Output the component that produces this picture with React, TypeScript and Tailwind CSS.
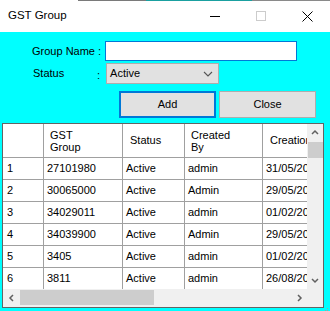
import React from "react";

const rows = [
  ["1", "27101980", "Active", "admin", "31/05/2019"],
  ["2", "30065000", "Active", "Admin", "29/05/2019"],
  ["3", "34029011", "Active", "admin", "01/02/2019"],
  ["4", "34039900", "Active", "Admin", "29/05/2019"],
  ["5", "3405", "Active", "admin", "01/02/2019"],
  ["6", "3811", "Active", "admin", "26/08/2019"],
];

const widths = ["w-[41px]", "w-[79px]", "w-[62px]", "w-[78px]", "w-[80px]"];

function Chevron({ dir, className }: { dir: "up" | "down" | "left" | "right"; className?: string }) {
  const d =
    dir === "up"
      ? "M1 5 L4 2 L7 5"
      : dir === "down"
      ? "M1 2 L4 5 L7 2"
      : dir === "left"
      ? "M5 1 L2 4 L5 7"
      : "M3 1 L6 4 L3 7";
  return (
    <svg width="8" height="8" viewBox="0 0 8 8" className={className}>
      <path d={d} fill="none" stroke="#606060" strokeWidth="1.5" />
    </svg>
  );
}

export default function App() {
  return (
    <div
      className="w-[330px] h-[311px] overflow-hidden flex flex-col bg-[#00ffff] text-black text-[11px]"
      style={{ fontFamily: '"Liberation Sans", Arial, sans-serif' }}
    >
      {/* top 1px strip */}
      <div className="h-[1px] flex shrink-0">
        <div className="w-[78px] bg-white" />
        <div className="w-[68px] bg-[#7a7a7a]" />
        <div className="w-[106px] bg-[#1aa0a0]" />
        <div className="flex-1 bg-[#8a8a8a]" />
      </div>
      {/* title bar */}
      <div className="h-[31px] bg-white flex items-center shrink-0 relative">
        <span className="pl-[8px] text-[11.5px] -mt-[2px]">GST Group</span>
        <div className="ml-auto flex items-center h-full -mt-[1px]">
          <div className="w-[46px] flex justify-center">
            <div className="w-[10px] h-[1px] bg-black" />
          </div>
          <div className="w-[46px] flex justify-center">
            <div className="w-[10px] h-[10px] border border-[#cccccc]" />
          </div>
          <div className="w-[46px] flex justify-center">
            <svg width="11" height="11" viewBox="0 0 11 11">
              <path d="M0.5 0.5 L10.5 10.5 M10.5 0.5 L0.5 10.5" stroke="#000" strokeWidth="1" />
            </svg>
          </div>
        </div>
      </div>
      {/* body */}
      <div className="flex-1 flex flex-col pt-[9px]">
        <div className="flex items-center h-[20px]">
          <span className="pl-[32px] w-[105px] shrink-0">Group Name :</span>
          <div className="w-[192px] h-[20px] bg-white border border-[#0078d7]" />
        </div>
        <div className="flex items-center h-[21px] mt-[2px]">
          <span className="pl-[33px] w-[97px] shrink-0">Status</span>
          <span className="mt-[3px]">:</span>
          <div className="ml-[6px] w-[113px] h-[21px] bg-[#e1e1e1] border border-[#adadad] flex items-center pl-[3px]">
            <span>Active</span>
            <svg width="10" height="6" viewBox="0 0 10 6" className="ml-auto mr-[5px]">
              <path d="M1 1 L5 5 L9 1" fill="none" stroke="#555" strokeWidth="1.1" />
            </svg>
          </div>
        </div>
        <div className="flex mt-[7px] pl-[119px] gap-[3px]">
          <div className="w-[97px] h-[27px] bg-[#e1e1e1] border-2 border-[#0078d7] flex items-center justify-center">
            Add
          </div>
          <div className="w-[97px] h-[27px] bg-[#e1e1e1] border border-[#adadad] flex items-center justify-center">
            Close
          </div>
        </div>
        {/* grid */}
        <div className="relative mt-[5px] ml-[2px] w-[322px] h-[185px] border border-[#646464] bg-[#f0f0f0] flex flex-col">
          <div className="flex h-[165px]">
            <div className="w-[304px] overflow-hidden bg-white">
              <div className="flex h-[34px] border-b border-[#a0a0a0] w-max">
                <div className={`${widths[0]} border-r border-[#a0a0a0] shrink-0`} />
                <div className={`${widths[1]} border-r border-[#a0a0a0] shrink-0 flex items-center pl-[6px] leading-[12px]`}>
                  GST
                  <br />
                  Group
                </div>
                <div className={`${widths[2]} border-r border-[#a0a0a0] shrink-0 flex items-center pl-[7px]`}>Status</div>
                <div className={`${widths[3]} border-r border-[#a0a0a0] shrink-0 flex items-center pl-[6px] leading-[12px]`}>
                  Created
                  <br />
                  By
                </div>
                <div className={`${widths[4]} border-r border-[#a0a0a0] shrink-0 flex items-center pl-[7px]`}>Creation Date</div>
              </div>
              {rows.map((r, i) => (
                <div key={i} className="flex h-[22px] border-b border-[#a0a0a0] w-max">
                  {r.map((c, j) => (
                    <div
                      key={j}
                      className={`${widths[j]} border-r border-[#a0a0a0] shrink-0 flex items-center ${j === 0 ? "pl-[4px]" : "pl-[3px]"} whitespace-nowrap overflow-hidden`}
                    >
                      {c}
                    </div>
                  ))}
                </div>
              ))}
            </div>
            {/* vertical scrollbar */}
            <div className="w-[16px] bg-[#f0f0f0] flex flex-col items-center">
              <div className="h-[17px] flex items-center justify-center">
                <Chevron dir="up" />
              </div>
              <div className="w-[15px] h-[16px] bg-[#cdcdcd] mt-[1px]" />
              <div className="flex-1" />
              <div className="h-[17px] flex items-center justify-center">
                <Chevron dir="down" />
              </div>
            </div>
          </div>
          {/* horizontal scrollbar */}
          <div className="flex h-[17px]">
            <div className="w-[304px] flex items-center bg-[#f0f0f0]">
              <div className="w-[17px] flex justify-center">
                <Chevron dir="left" />
              </div>
              <div className="w-[134px] h-[15px] bg-[#cdcdcd]" />
              <div className="flex-1" />
              <div className="w-[17px] flex justify-center">
                <Chevron dir="right" />
              </div>
            </div>
            <div className="w-[16px] bg-[#f0f0f0]" />
          </div>
          {/* size grip */}
          <div className="absolute right-[-6px] bottom-[-5px] w-[6px] h-[6px]">
            <div className="absolute right-[1px] bottom-[1px] w-[1px] h-[1px] bg-[#a0a0a0]" />
            <div className="absolute right-[3px] bottom-[1px] w-[1px] h-[1px] bg-[#a0a0a0]" />
            <div className="absolute right-[1px] bottom-[3px] w-[1px] h-[1px] bg-[#a0a0a0]" />
          </div>
        </div>
      </div>
    </div>
  );
}
